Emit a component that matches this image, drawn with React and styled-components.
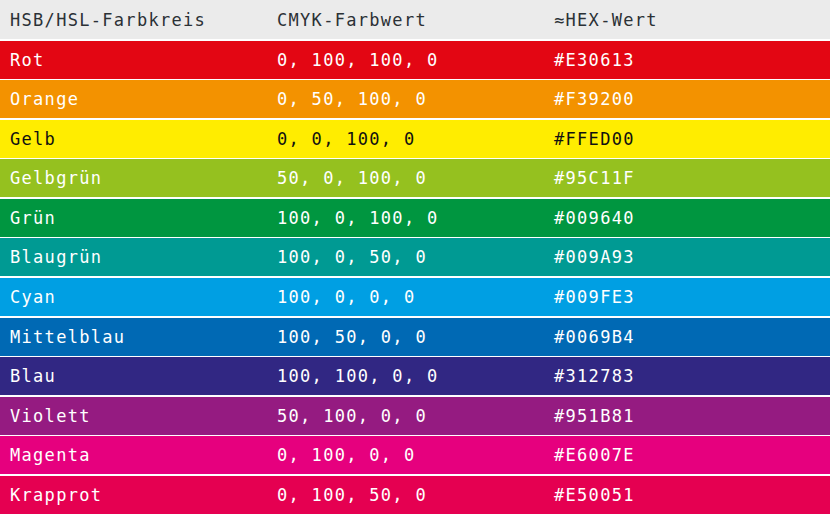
import React from "react";
import styled, { createGlobalStyle } from "styled-components";

const Global = createGlobalStyle`
  html, body { margin: 0; padding: 0; background: #ffffff; }
  body { font-family: "DejaVu Sans Mono", "Liberation Mono", monospace; }
`;

const Table = styled.div`
  width: 830px;
  height: 514px;
  display: grid;
  grid-template-rows: 39px repeat(12, 1fr);
  row-gap: 1.5px;
  background: #ffffff;
`;

const Row = styled.div`
  display: grid;
  grid-template-columns: 267px 277px 1fr;
  align-items: center;
  padding-left: 10px;
  background: ${(p) => p.$bg};
  color: ${(p) => p.$fg || "#ffffff"};
  font-size: 17px;
  letter-spacing: 1.3px;
  white-space: nowrap;
`;

const HeaderRow = styled(Row)`
  background: #ebebeb;
  color: #2b3136;
`;

const Cell = styled.span`
  display: block;
`;

const colors = [
  ["Rot", "0, 100, 100, 0", "#E30613"],
  ["Orange", "0, 50, 100, 0", "#F39200"],
  ["Gelb", "0, 0, 100, 0", "#FFED00", "#111111"],
  ["Gelbgrün", "50, 0, 100, 0", "#95C11F"],
  ["Grün", "100, 0, 100, 0", "#009640"],
  ["Blaugrün", "100, 0, 50, 0", "#009A93"],
  ["Cyan", "100, 0, 0, 0", "#009FE3"],
  ["Mittelblau", "100, 50, 0, 0", "#0069B4"],
  ["Blau", "100, 100, 0, 0", "#312783"],
  ["Violett", "50, 100, 0, 0", "#951B81"],
  ["Magenta", "0, 100, 0, 0", "#E6007E"],
  ["Krapprot", "0, 100, 50, 0", "#E50051"],
];

export default function App() {
  return (
    <>
      <Global />
      <Table>
        <HeaderRow>
          <Cell>HSB/HSL-Farbkreis</Cell>
          <Cell>CMYK-Farbwert</Cell>
          <Cell>≈HEX-Wert</Cell>
        </HeaderRow>
        {colors.map(([name, cmyk, hex, fg]) => (
          <Row key={name} $bg={hex} $fg={fg}>
            <Cell>{name}</Cell>
            <Cell>{cmyk}</Cell>
            <Cell>{hex}</Cell>
          </Row>
        ))}
      </Table>
    </>
  );
}
